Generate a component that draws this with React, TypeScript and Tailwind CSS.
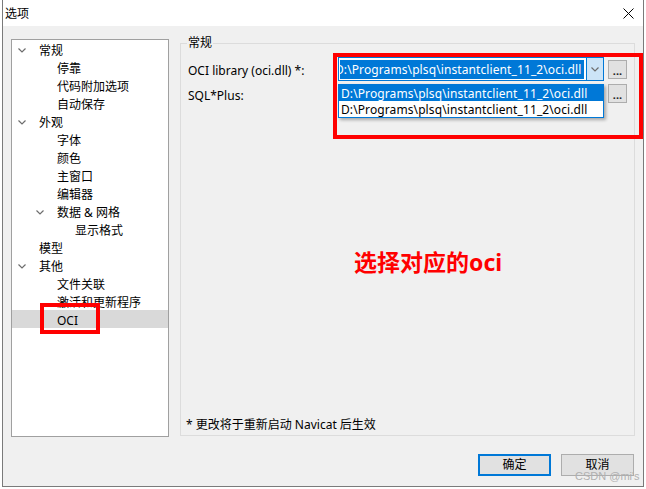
import React from "react";

type Node = {
  label: string;
  depth: number;
  open?: boolean;
  selected?: boolean;
};

const tree: Node[] = [
  { label: "常规", depth: 0, open: true },
  { label: "停靠", depth: 1 },
  { label: "代码附加选项", depth: 1 },
  { label: "自动保存", depth: 1 },
  { label: "外观", depth: 0, open: true },
  { label: "字体", depth: 1 },
  { label: "颜色", depth: 1 },
  { label: "主窗口", depth: 1 },
  { label: "编辑器", depth: 1 },
  { label: "数据 & 网格", depth: 1, open: true },
  { label: "显示格式", depth: 2 },
  { label: "模型", depth: 0 },
  { label: "其他", depth: 0, open: true },
  { label: "文件关联", depth: 1 },
  { label: "激活和更新程序", depth: 1 },
  { label: "OCI", depth: 1, selected: true },
];

const ociPath = "D:\\Programs\\plsq\\instantclient_11_2\\oci.dll";

function Chevron() {
  return (
    <svg width="8" height="5" viewBox="0 0 8 5" className="block">
      <polyline points="0.5,0.5 4,4 7.5,0.5" fill="none" stroke="#6d6d6d" strokeWidth="1.2" />
    </svg>
  );
}

function TreeRow({ node }: { node: Node }) {
  const pad = ["pl-[6px]", "pl-[24px]", "pl-[42px]"][node.depth];
  return (
    <div
      className={`h-[18px] flex items-center ${pad} ${node.selected ? "bg-[#d9d9d9]" : ""}`}
    >
      <span className="w-[21px] flex items-center pt-[2px]">{node.open && <Chevron />}</span>
      <span className="whitespace-pre text-[#000] pt-[4px]">{node.label}</span>
    </div>
  );
}

function BrowseButton() {
  return (
    <button className="w-[19px] h-[19px] border border-[#adadad] bg-[#e1e1e1] flex items-end justify-center text-[11px] leading-[14px] font-bold text-[#222]">
      ...
    </button>
  );
}

export default function App() {
  return (
    <div className="relative w-[646px] h-[489px] bg-white overflow-hidden font-['Noto_Sans','Noto_Sans_CJK_SC',sans-serif] text-[12px] text-black">
      <div className="ml-[2px] w-[642px] h-[487px] border border-t-0 border-[#7a7a7a] flex flex-col">
        {/* title bar */}
        <div className="h-[26px] bg-white flex items-center justify-between pl-[2px] pr-[9px]">
          <span className="text-[12px] pt-[2px]">选项</span>
          <svg width="11" height="11" viewBox="0 0 11 11">
            <path d="M0.5 0.5 L10.5 10.5 M10.5 0.5 L0.5 10.5" stroke="#000" strokeWidth="1" />
          </svg>
        </div>

        <div className="flex-1 bg-[#f0f0f0] flex flex-col">
          <div className="flex pt-[13px] pl-[8px]">
            {/* options tree */}
            <div className="relative w-[158px] h-[398px] bg-white border border-[#a0a0a0]">
              {tree.map((n) => (
                <TreeRow key={n.label} node={n} />
              ))}
              <div className="absolute left-[28px] top-[263px] w-[60px] h-[31px] border-4 border-[#ff0000]" />
            </div>

            {/* general group */}
            <div className="relative ml-[11px] mt-[4px] w-[455px] h-[393px] border border-[#dcdcdc] flex flex-col">
              <span className="absolute left-[6px] -top-[9px] px-[1px] bg-[#f0f0f0] leading-[16px]">常规</span>

              <div className="mt-[13px] pl-[7px] flex items-center h-[24px]">
                <span className="w-[150px] pt-[4px]">OCI library (oci.dll) *:</span>
                <div className="relative w-[266px] h-[24px] border border-[#0078d7] bg-white flex">
                  <div className="flex-1 overflow-hidden pl-[1px] pt-[2px] pr-[2px]">
                    <div className="h-[19px] bg-[#0078d7] text-white leading-[20px] overflow-hidden whitespace-nowrap tracking-[0.1px]">
                      <span className="inline-block -ml-[5px]">{ociPath}</span>
                    </div>
                  </div>
                  <div className="w-[17px] h-full bg-[#cce4f7] border-l border-[#0078d7] flex items-center justify-center">
                    <Chevron />
                  </div>
                  {/* open list */}
                  <div className="absolute -left-[1px] top-[26px] w-[266px] border border-[#0078d7] bg-white shadow-[2px_2px_3px_rgba(0,0,0,0.3)] z-10 tracking-[0.1px]">
                    <div className="h-[16px] leading-[18px] bg-[#0078d7] text-white pl-[2px] whitespace-nowrap">{ociPath}</div>
                    <div className="h-[16px] leading-[17px] pl-[2px] whitespace-nowrap">{ociPath}</div>
                  </div>
                </div>
                <span className="ml-[4px]">
                  <BrowseButton />
                </span>
              </div>

              <div className="mt-[3px] pl-[7px] flex items-center h-[19px]">
                <span className="w-[150px] pt-[5px]">SQL*Plus:</span>
                <div className="w-[266px] h-[19px]" />
                <span className="ml-[4px]">
                  <BrowseButton />
                </span>
              </div>

              <div className="flex-1 flex items-center pl-[173px] pt-[4px]">
                <span className="text-[23px] font-bold text-[#ff0000] leading-[28px]">选择对应的oci</span>
              </div>

              <div className="pl-[5px] pb-[2px] leading-[16px]">* 更改将于重新启动 Navicat 后生效</div>
            </div>
          </div>

          {/* dialog buttons */}
          <div className="mt-[17px] flex justify-end gap-[10px] pr-[9px]">
            <button className="w-[73px] h-[22px] border-2 border-[#0078d7] bg-[#e1e1e1] leading-[18px]">确定</button>
            <button className="w-[73px] h-[22px] border border-[#adadad] bg-[#e1e1e1] leading-[20px]">取消</button>
          </div>
        </div>
      </div>

      <div className="absolute left-[333px] top-[53px] w-[310px] h-[86px] border-4 border-[#ff0000]" />
      <span className="absolute left-[575px] top-[468px] text-[11px] text-[#b0b0b0] font-['Liberation_Sans',sans-serif]">CSDN @mi's</span>
    </div>
  );
}
